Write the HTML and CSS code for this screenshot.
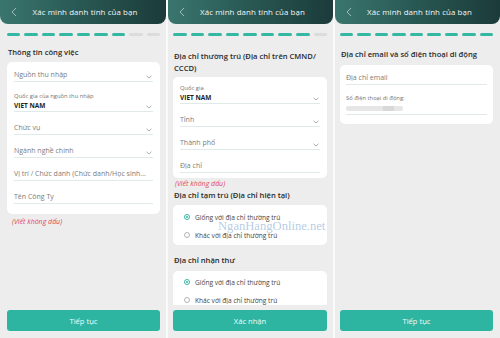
FILE: index.html
```html
<!DOCTYPE html>
<html lang="vi">
<head>
<meta charset="utf-8">
<title>Xác minh danh tính của bạn</title>
<link rel="stylesheet" href="styles.css">
</head>
<body>
<div class="screens">

  <section class="panel p1">
    <header class="head">
      <svg class="back" width="6" height="10" viewBox="0 0 6 10"><path d="M5 1 L1 5 L5 9" fill="none" stroke="#a9c4bf" stroke-width="0.9"/></svg>
      <span class="head-title">Xác minh danh tính của bạn</span>
    </header>
    <div class="body">
      <div class="dashes">
        <i class="on"></i><i class="on"></i><i class="on"></i><i class="on"></i><i class="on"></i><i class="on"></i><i class="on"></i><i></i><i></i>
      </div>
      <h2 class="title t1">Thông tin công việc</h2>
      <div class="card c1">
        <div class="field first">
          <span class="ph">Nguồn thu nhập</span>
          <svg class="chev" width="6" height="4" viewBox="0 0 6 4"><path d="M0.5 0.8 L3 3 L5.5 0.8" fill="none" stroke="#9a9a9a" stroke-width="0.8"/></svg>
        </div>
        <div class="field labeled l1">
          <span class="lbl">Quốc gia của nguồn thu nhập</span>
          <div class="val-row">
            <span class="val">VIET NAM</span>
            <svg class="chev" width="6" height="4" viewBox="0 0 6 4"><path d="M0.5 0.8 L3 3 L5.5 0.8" fill="none" stroke="#9a9a9a" stroke-width="0.8"/></svg>
          </div>
        </div>
        <div class="field">
          <span class="ph">Chức vụ</span>
          <svg class="chev" width="6" height="4" viewBox="0 0 6 4"><path d="M0.5 0.8 L3 3 L5.5 0.8" fill="none" stroke="#9a9a9a" stroke-width="0.8"/></svg>
        </div>
        <div class="field">
          <span class="ph">Ngành nghề chính</span>
          <svg class="chev" width="6" height="4" viewBox="0 0 6 4"><path d="M0.5 0.8 L3 3 L5.5 0.8" fill="none" stroke="#9a9a9a" stroke-width="0.8"/></svg>
        </div>
        <div class="field">
          <span class="ph">Vị trí / Chức danh (Chức danh/Học sinh...</span>
        </div>
        <div class="field">
          <span class="ph">Tên Công Ty</span>
        </div>
      </div>
      <p class="note n1">(Viết không dấu)</p>
    </div>
    <footer class="foot"><button class="btn">Tiếp tục</button></footer>
  </section>

  <section class="panel p2">
    <header class="head">
      <svg class="back" width="6" height="10" viewBox="0 0 6 10"><path d="M5 1 L1 5 L5 9" fill="none" stroke="#a9c4bf" stroke-width="0.9"/></svg>
      <span class="head-title">Xác minh danh tính của bạn</span>
    </header>
    <div class="body">
      <div class="dashes">
        <i class="on"></i><i class="on"></i><i class="on"></i><i class="on"></i><i class="on"></i><i class="on"></i><i class="on"></i><i class="on"></i><i></i>
      </div>
      <h2 class="title t2">Địa chỉ thường trú (Địa chỉ trên CMND/ CCCD)</h2>
      <div class="card c2">
        <div class="field labeled l2">
          <span class="lbl">Quốc gia</span>
          <div class="val-row">
            <span class="val">VIET NAM</span>
            <svg class="chev" width="6" height="4" viewBox="0 0 6 4"><path d="M0.5 0.8 L3 3 L5.5 0.8" fill="none" stroke="#9a9a9a" stroke-width="0.8"/></svg>
          </div>
        </div>
        <div class="field">
          <span class="ph">Tỉnh</span>
          <svg class="chev" width="6" height="4" viewBox="0 0 6 4"><path d="M0.5 0.8 L3 3 L5.5 0.8" fill="none" stroke="#9a9a9a" stroke-width="0.8"/></svg>
        </div>
        <div class="field">
          <span class="ph">Thành phố</span>
          <svg class="chev" width="6" height="4" viewBox="0 0 6 4"><path d="M0.5 0.8 L3 3 L5.5 0.8" fill="none" stroke="#9a9a9a" stroke-width="0.8"/></svg>
        </div>
        <div class="field">
          <span class="ph">Địa chỉ</span>
        </div>
      </div>
      <p class="note n2">(Viết không dấu)</p>
      <h2 class="title t3">Địa chỉ tạm trú (Địa chỉ hiện tại)</h2>
      <div class="card radios r1">
        <div class="radio"><span class="dot sel"></span>Giống với địa chỉ thường trú</div>
        <div class="radio"><span class="dot"></span>Khác với địa chỉ thường trú</div>
        <span class="watermark">NganHangOnline.net</span>
      </div>
      <h2 class="title t4">Địa chỉ nhận thư</h2>
      <div class="card radios r2">
        <div class="radio"><span class="dot sel"></span>Giống với địa chỉ thường trú</div>
        <div class="radio"><span class="dot"></span>Khác với địa chỉ thường trú</div>
      </div>
    </div>
    <footer class="foot"><button class="btn">Xác nhận</button></footer>
  </section>

  <section class="panel p3">
    <header class="head">
      <svg class="back" width="6" height="10" viewBox="0 0 6 10"><path d="M5 1 L1 5 L5 9" fill="none" stroke="#a9c4bf" stroke-width="0.9"/></svg>
      <span class="head-title">Xác minh danh tính của bạn</span>
    </header>
    <div class="body">
      <div class="dashes">
        <i class="on"></i><i class="on"></i><i class="on"></i><i class="on"></i><i class="on"></i><i class="on"></i><i class="on"></i><i class="on"></i><i class="on"></i>
      </div>
      <h2 class="title t5">Địa chỉ email và số điện thoại di động</h2>
      <div class="card c3">
        <div class="field first3">
          <span class="ph">Địa chỉ email</span>
        </div>
        <div class="field labeled l3">
          <span class="lbl">Số điện thoại di động:</span>
          <div class="val-row blur-row">
            <span class="blur b1"></span><span class="blur b2"></span><span class="blur b3"></span>
          </div>
        </div>
      </div>
    </div>
    <footer class="foot"><button class="btn">Tiếp tục</button></footer>
  </section>

</div>
</body>
</html>
```
FILE: styles.css
```css
* { box-sizing: border-box; margin: 0; padding: 0; }
html, body { width: 500px; height: 338px; overflow: hidden; background: #fafafa; }
body { font-family: "Open Sans", "Noto Sans", sans-serif; color: #2b2b2b; }

.screens { display: flex; gap: 2px; width: 500px; height: 338px; }

.panel {
  display: flex;
  flex-direction: column;
  height: 338px;
  background: #ededed;
}
.p1 { width: 166px; }
.p2 { width: 165px; }
.p3 { width: 165px; }

.head {
  height: 24px;
  flex: none;
  display: flex;
  align-items: center;
  justify-content: center;
  position: relative;
  background: linear-gradient(90deg, #3a766e 0%, #2a5a55 45%, #1b3b3a 100%);
  border-radius: 0 0 8px 8px;
}
.back { position: absolute; left: 11px; top: 7px; }
.head-title {
  color: #f2f6f5;
  font-size: 7.9px;
  font-weight: 500;
  letter-spacing: 0.1px;
  line-height: 10px;
  margin-left: 4px;
}

.body {
  flex: 1;
  overflow: hidden;
  display: flex;
  flex-direction: column;
  position: relative;
}
.p1 .body { padding: 0 6px 0 7px; }
.p2 .body { padding: 0 6px 0 5px; }
.p3 .body { padding: 0 7px 0 5px; }

.dashes { display: flex; gap: 4px; margin-top: 9px; height: 3px; flex: none; }
.dashes i { flex: 1; height: 3px; border-radius: 2px; background: #dcdcdc; }
.dashes i.on { background: #34b7a3; }

.title {
  font-size: 7.6px;
  font-weight: 600;
  line-height: 10px;
  color: #2a2a2a;
  flex: none;
}
.t1 { margin-top: 11px; padding-left: 1px; }
.t2 { margin-top: 15px; line-height: 11.5px; padding-left: 1px; padding-right: 1px; }
.t3 { margin-top: 2px; padding-left: 1px; }
.t4 { margin-top: 10px; padding-left: 1px; }
.t5 { margin-top: 13px; padding-left: 1px; }

.card {
  background: #fff;
  border-radius: 5px;
  padding: 0 7px 10px;
  flex: none;
}
.c1 { margin-top: 5px; }
.c2 { margin-top: 3px; padding-bottom: 5px; }
.c3 { margin-top: 6px; padding: 0 6px 9px; }

.field {
  height: 23px;
  border-bottom: 1px solid #e0eae8;
  display: flex;
  align-items: flex-end;
  justify-content: space-between;
  padding-bottom: 1px;
}
.field.first { height: 20px; }
.field.first3 { height: 20px; }
.field.labeled {
  display: block;
  height: auto;
}
.l1 { padding-top: 10px; }
.l2 { padding-top: 7px; }
.l3 { padding-top: 9px; }

.ph { font-size: 7px; line-height: 10px; color: #7c7c7c; white-space: nowrap; }
.lbl { display: block; font-size: 5.8px; line-height: 8px; color: #747474; }
.val-row { display: flex; justify-content: space-between; align-items: flex-end; margin-top: 1px; height: 9px; }
.val { font-size: 6.5px; font-weight: 700; line-height: 9px; color: #1f1f1f; }
.chev { margin-right: 1px; margin-bottom: 1px; flex: none; }

.blur-row { justify-content: flex-start; align-items: center; height: 10px; }
.blur { display: block; height: 5px; background: #e6e6e6; }
.b1 { width: 37px; border-radius: 2px 0 0 2px; }
.b2 { width: 11px; background: #d8d8d8; }
.b3 { width: 9px; border-radius: 0 2px 2px 0; }

.note {
  font-size: 7px;
  line-height: 9px;
  font-style: italic;
  font-weight: 400;
  color: #e2475a;
  flex: none;
}
.n1 { margin-top: 3px; padding-left: 5px; }
.n2 { margin-top: 1px; padding-left: 2px; }

.radios { position: relative; padding: 7px 10px 5px; }
.r1 { margin-top: 5px; }
.r2 { margin-top: 6px; padding-top: 6px; }
.radio {
  display: flex;
  align-items: center;
  height: 10px;
  font-size: 6.6px;
  color: #444;
  white-space: nowrap;
}
.radio + .radio { margin-top: 8px; }
.dot {
  width: 6px; height: 6px;
  border-radius: 50%;
  border: 0.8px solid #b5b5b5;
  margin-right: 5px;
  margin-left: 1px;
  flex: none;
  position: relative;
}
.dot.sel { border-color: #34b7a3; }
.dot.sel::after {
  content: "";
  position: absolute;
  left: 1px; top: 1px;
  width: 2.4px; height: 2.4px;
  border-radius: 50%;
  background: #34b7a3;
}

.watermark {
  position: absolute;
  left: 45px;
  top: 14px;
  font-family: "Liberation Serif", "DejaVu Serif", serif;
  font-size: 12.6px;
  color: rgba(120, 160, 205, 0.55);
  white-space: nowrap;
  pointer-events: none;
}

.foot { flex: none; padding: 5px 0 7px; }
.p1 .foot { padding-left: 7px; padding-right: 6px; }
.p2 .foot { padding-left: 5px; padding-right: 6px; }
.p3 .foot { padding-left: 5px; padding-right: 7px; }
.btn {
  display: block;
  width: 100%;
  height: 21px;
  border: none;
  border-radius: 3px;
  background: #2eb5a2;
  color: #f3fbfa;
  font-family: "Open Sans", "Noto Sans", sans-serif;
  font-size: 7.6px;
  font-weight: 500;
}
```
